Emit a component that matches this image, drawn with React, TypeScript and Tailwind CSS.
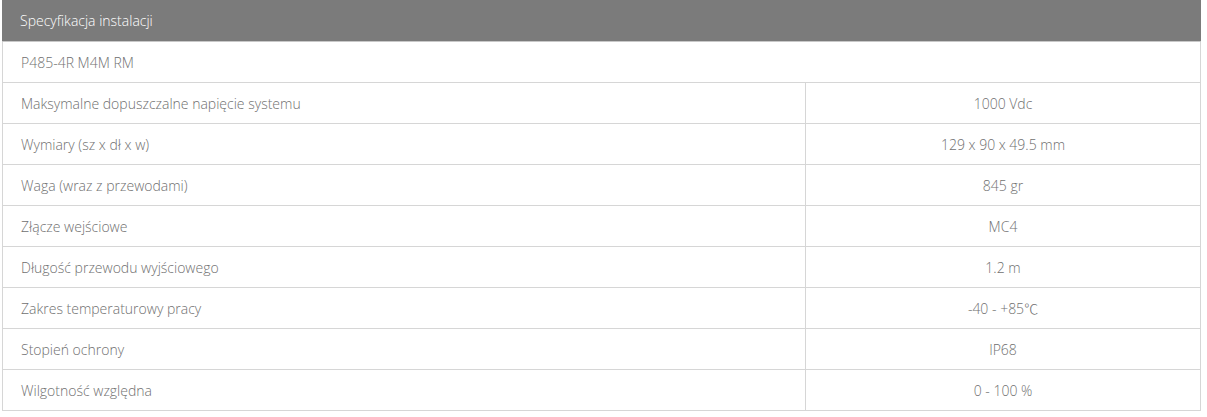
import React from "react";

const rows: [string, React.ReactNode][] = [
  ["Maksymalne dopuszczalne napięcie systemu", "1000 Vdc"],
  ["Wymiary (sz x dł x w)", "129 x 90 x 49.5 mm"],
  ["Waga (wraz z przewodami)", "845 gr"],
  ["Złącze wejściowe", "MC4"],
  ["Długość przewodu wyjściowego", "1.2 m"],
  [
    "Zakres temperaturowy pracy",
    <>
      -40 - +85
      <span className="font-light" style={{ fontFamily: '"Noto Sans CJK JP", sans-serif' }}>
        ℃
      </span>
    </>,
  ],
  ["Stopień ochrony", "IP68"],
  ["Wilgotność względna", "0 - 100 %"],
];

export default function App() {
  return (
    <div className="bg-white w-[1207px] h-[417px]" style={{ fontFamily: '"Open Sans", sans-serif' }}>
      <div className="ml-[2px] w-[1199px]">
        <div className="h-[42px] bg-[#7b7b7b] border-b border-[#c8c8c8] flex items-center pl-[18px] text-[14px] font-light text-white">
          Specyfikacja instalacji
        </div>
        <div className="h-[41px] border-x border-b border-[#d6d6d6] flex items-center pl-[18px] text-[14px] font-light text-[#707070]">
          P485-4R M4M RM
        </div>
        {rows.map(([k, v]) => (
          <div key={k} className="h-[41px] border-x border-b border-[#d6d6d6] flex text-[14px] font-light text-[#707070]">
            <div className="w-[803px] border-r border-[#d6d6d6] flex items-center pl-[18px]">{k}</div>
            <div className="flex-1 flex items-center justify-center">{v}</div>
          </div>
        ))}
      </div>
    </div>
  );
}
